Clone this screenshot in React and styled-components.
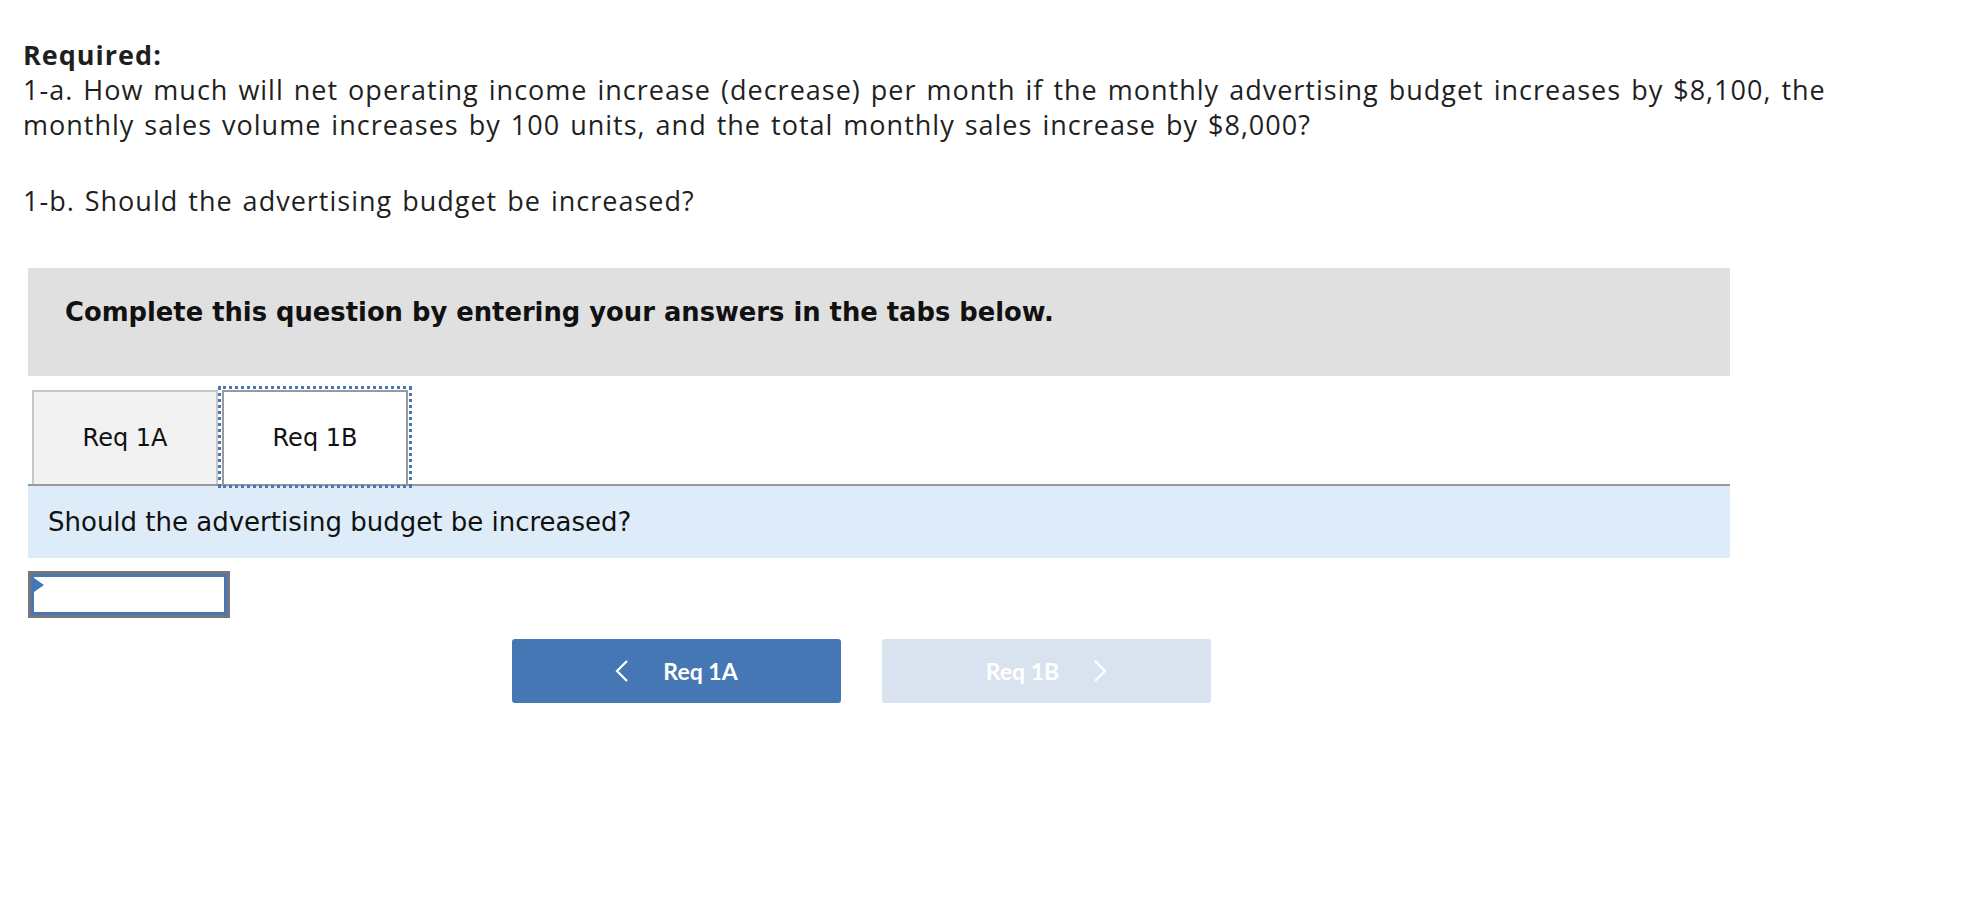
import styled, { createGlobalStyle } from "styled-components";

const GlobalStyle = createGlobalStyle`
  body {
    margin: 0;
    background: #ffffff;
  }
`;

const Page = styled.div`
  padding: 37px 0 0 23px;
`;

const Question = styled.div`
  font-family: "Open Sans", Lato, sans-serif;
  font-size: 27px;
  line-height: 35px;
  letter-spacing: 1px;
  word-spacing: 2px;
  color: #1f1f1f;
`;

const Heading = styled.div`
  font-weight: 700;
`;

const Para = styled.p`
  margin: ${(p) => (p.$gap ? "41px" : "0")} 0 0;
`;

const Widget = styled.div`
  margin: 50px 0 0 5px;
  width: 1702px;
`;

const Banner = styled.div`
  height: 108px;
  box-sizing: border-box;
  padding: 29px 0 0 37px;
  background: #e0e0e0;
  font-family: "DejaVu Sans", Verdana, sans-serif;
  font-weight: 700;
  font-size: 25.8px;
  color: #111;
`;

const TabBar = styled.div`
  display: flex;
  gap: 4px;
  margin-top: 14px;
  padding-left: 4px;
  border-bottom: 2px solid #999;
`;

const Tab = styled.div`
  width: 186px;
  height: 94px;
  box-sizing: border-box;
  display: flex;
  align-items: center;
  justify-content: center;
  border: 2px solid ${(p) => (p.$active ? "#999" : "#c8c8c8")};
  border-bottom: none;
  background: ${(p) => (p.$active ? "#ffffff" : "#f2f2f2")};
  outline: ${(p) => (p.$active ? "3px dotted #4677b6" : "none")};
  outline-offset: 1px;
  font-family: "DejaVu Sans", Verdana, sans-serif;
  font-size: 24px;
  color: #111;
`;

const Prompt = styled.div`
  height: 72px;
  display: flex;
  align-items: center;
  padding-left: 20px;
  background: #ddecf8;
  font-family: "DejaVu Sans", Verdana, sans-serif;
  font-size: 26px;
  color: #111;
`;

const AnswerBox = styled.div`
  position: relative;
  margin-top: 13px;
  width: 202px;
  height: 47px;
  box-sizing: border-box;
  border: 3px solid #777;
  box-shadow: inset 0 0 0 3px #4477b4;
  background: #fff;

  &::before {
    content: "";
    position: absolute;
    left: 3px;
    top: 4px;
    border-top: 7px solid transparent;
    border-bottom: 7px solid transparent;
    border-left: 10px solid #4477b4;
  }
`;

const Nav = styled.div`
  display: flex;
  gap: 41px;
  margin-top: 21px;
  padding-left: 484px;
`;

const NavButton = styled.button`
  width: 329px;
  height: 64px;
  display: flex;
  align-items: center;
  justify-content: center;
  gap: 34px;
  border: none;
  border-radius: 3px;
  background: ${(p) => (p.$disabled ? "#d9e3ef" : "#4677b5")};
  color: #ffffff;
  font-family: Lato, "Open Sans", sans-serif;
  font-weight: 700;
  font-size: 23px;
  padding: 0;
`;

const Chevron = ({ dir }) => (
  <svg width="14" height="22" viewBox="0 0 14 22" fill="none">
    <polyline
      points={dir === "left" ? "12,1 2,11 12,21" : "2,1 12,11 2,21"}
      stroke="#ffffff"
      strokeWidth="2.2"
      strokeLinejoin="miter"
    />
  </svg>
);

export default function App() {
  return (
    <Page>
      <GlobalStyle />
      <Question>
        <Heading>Required:</Heading>
        <Para>
          1-a. How much will net operating income increase (decrease) per month if
          the monthly advertising budget increases by $8,100, the
          <br />
          monthly sales volume increases by 100 units, and the total monthly sales
          increase by $8,000?
        </Para>
        <Para $gap>1-b. Should the advertising budget be increased?</Para>
      </Question>

      <Widget>
        <Banner>Complete this question by entering your answers in the tabs below.</Banner>
        <TabBar>
          <Tab>Req 1A</Tab>
          <Tab $active>Req 1B</Tab>
        </TabBar>
        <Prompt>Should the advertising budget be increased?</Prompt>
        <AnswerBox />
        <Nav>
          <NavButton>
            <Chevron dir="left" />
            <span>Req 1A</span>
          </NavButton>
          <NavButton $disabled>
            <span>Req 1B</span>
            <Chevron dir="right" />
          </NavButton>
        </Nav>
      </Widget>
    </Page>
  );
}
